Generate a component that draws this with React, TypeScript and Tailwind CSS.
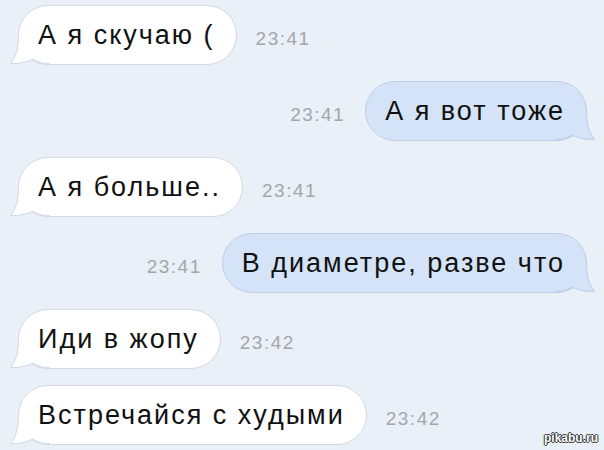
import { memo } from "react";

type Message = {
	text: string;
	time: string;
	out: boolean;
};

const messages: Message[] = [
	{ text: "А я скучаю (", time: "23:41", out: false },
	{ text: "А я вот тоже", time: "23:41", out: true },
	{ text: "А я больше..", time: "23:41", out: false },
	{ text: "В диаметре, разве что", time: "23:41", out: true },
	{ text: "Иди в жопу", time: "23:42", out: false },
	{ text: "Встречайся с худыми", time: "23:42", out: false },
];

/** Bubble tail drawn over the bottom corner of the bubble. */
function Tail({ fill, stroke, out }: { fill: string; stroke: string; out: boolean }) {
	return (
		<svg
			width="40"
			height="30"
			viewBox="0 0 40 30"
			className={
				out
					? "pointer-events-none absolute -right-[9px] bottom-0 -scale-x-100"
					: "pointer-events-none absolute -left-[9px] bottom-0"
			}
		>
			<path d="M8.5 0 C8.5 14 6 23 0.5 29.5 C9 30 17 28 23 25 C28 28.5 33 29.5 40 29.5 L40 0 Z" fill={fill} />
			<path
				d="M8.5 0 C8.5 14 6 23 0.5 29.5 C9 30 17 28 23 25 C28 28.5 33 29.5 40 29.5"
				fill="none"
				stroke={stroke}
				strokeWidth="1"
			/>
		</svg>
	);
}

const Bubble = memo(function Bubble({ text, out }: { text: string; out: boolean }) {
	return (
		<div
			className={
				out
					? "relative flex h-[60px] items-center rounded-[30px] border border-[#bccee6] bg-[#d4e3f7] pl-[19px] pr-[21px]"
					: "relative flex h-[60px] items-center rounded-[30px] border border-[#d3d9e1] bg-white pl-[19px] pr-[21px]"
			}
		>
			<Tail fill={out ? "#d4e3f7" : "#ffffff"} stroke={out ? "#bccee6" : "#d3d9e1"} out={out} />
			<span className="relative whitespace-nowrap text-[27px] leading-none tracking-[2px] text-[#111]">{text}</span>
		</div>
	);
});

function Time({ value }: { value: string }) {
	return (
		<span className="mt-[6px] whitespace-nowrap text-[19px] leading-none tracking-[1.5px] text-[#a3a7ac]">
			{value}
		</span>
	);
}

export default function App() {
	return (
		<div
			className="relative flex h-[450px] w-[604px] flex-col gap-4 overflow-hidden bg-[#eaf0f8] pt-[5px]"
			style={{ fontFamily: '"Liberation Sans", Arial, sans-serif' }}
		>
			{messages.map((m, i) =>
				m.out ? (
					<div key={i} className="flex items-center justify-end gap-[20px] pr-[17px]">
						<Time value={m.time} />
						<Bubble text={m.text} out />
					</div>
				) : (
					<div key={i} className="flex items-center gap-[19px] pl-[18px]">
						<Bubble text={m.text} out={false} />
						<Time value={m.time} />
					</div>
				),
			)}

			{/* watermark */}
			<span className="absolute bottom-[6px] right-[6px] text-[12px] font-bold leading-none text-white [text-shadow:0_0_1px_#333,1px_0_0_#333,-1px_0_0_#333,0_1px_0_#333,0_-1px_0_#333]">
				pikabu.ru
			</span>
		</div>
	);
}
